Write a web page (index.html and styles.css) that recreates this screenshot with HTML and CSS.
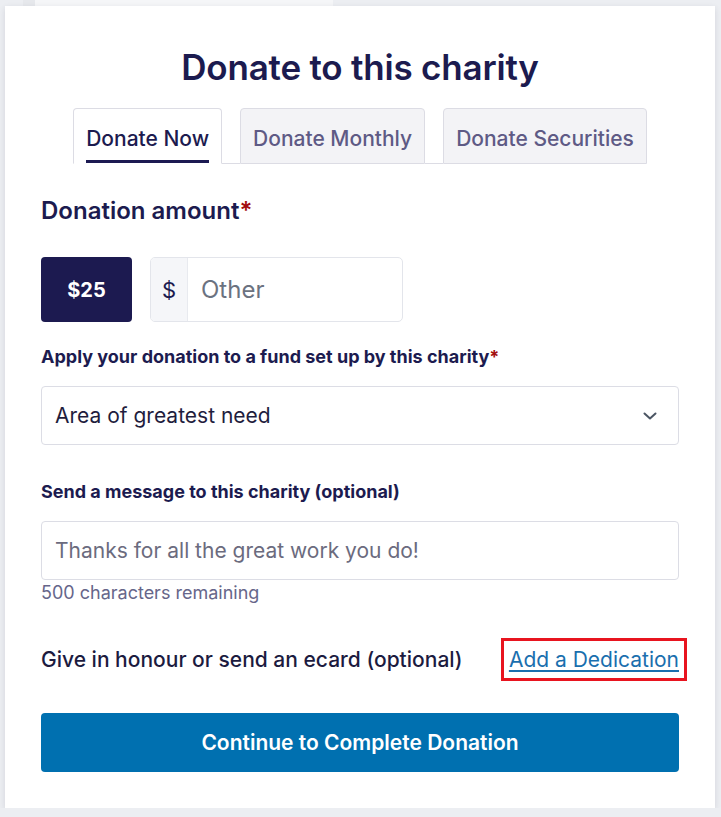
FILE: index.html
```html
<!DOCTYPE html>
<html lang="en">
<head>
<meta charset="utf-8">
<title>Donate to this charity</title>
<link rel="stylesheet" href="styles.css">
</head>
<body>
<div class="top-strip"><div class="top-strip-card"></div></div>
<main class="card">
  <h1 class="title">Donate to this charity</h1>
  <div class="tabs">
    <div class="tab tab-active"><span class="tab-label">Donate Now</span></div>
    <div class="tab-gap"></div>
    <div class="tab"><span class="tab-label">Donate Monthly</span></div>
    <div class="tab-gap"></div>
    <div class="tab"><span class="tab-label">Donate Securities</span></div>
  </div>

  <h2 class="section-title">Donation amount<span class="req">*</span></h2>

  <div class="amount-row">
    <button class="amount-btn">$25</button>
    <div class="other-group">
      <span class="other-prefix">$</span>
      <span class="other-input">Other</span>
    </div>
  </div>

  <label class="field-label fund-label">Apply your donation to a fund set up by this charity<span class="req">*</span></label>
  <div class="select">
    <span class="select-value">Area of greatest need</span>
    <svg class="chevron" width="16" height="16" viewBox="0 0 16 16" aria-hidden="true">
      <polyline points="2.5,5.5 8,10.5 13.5,5.5" fill="none" stroke="#4b5563" stroke-width="2" stroke-linecap="round" stroke-linejoin="round"/>
    </svg>
  </div>

  <label class="field-label msg-label">Send a message to this charity (optional)</label>
  <div class="textarea">Thanks for all the great work you do!</div>
  <div class="counter">500 characters remaining</div>

  <div class="dedication-row">
    <span class="dedication-text">Give in honour or send an ecard (optional)</span>
    <a class="dedication-link" href="#">Add a Dedication</a>
  </div>

  <button class="continue-btn">Continue to Complete Donation</button>
</main>
</body>
</html>
```

FILE: styles.css
```css
* {
  box-sizing: border-box;
}

html, body {
  margin: 0;
  padding: 0;
}

body {
  background: #eceef2;
  font-family: Inter, "Noto Sans", "Liberation Sans", sans-serif;
  color: #1c1b4f;
  padding: 0 6px 0 5px;
}

.top-strip {
  height: 6px;
  padding-left: 18px;
}

.top-strip-card {
  width: 310px;
  height: 6px;
  background: #f5f6f8;
  border-left: 12px solid #e6e8ec;
}

.card {
  width: 710px;
  background: #ffffff;
  box-shadow: 0 2px 6px rgba(30, 30, 60, 0.12);
  padding: 39px 36px 36px;
  display: flex;
  flex-direction: column;
}

.title {
  margin: 0;
  text-align: center;
  font-size: 35px;
  line-height: 44px;
  font-weight: 600;
  color: #1c1b4f;
  letter-spacing: -0.2px;
}

.tabs {
  align-self: center;
  display: flex;
  margin-top: 19px;
  height: 56px;
}

.tab {
  display: flex;
  align-items: flex-end;
  padding: 0 12px;
  background: #f3f3f6;
  border: 1px solid #dcdce4;
  border-radius: 4px 4px 0 0;
  color: #5e5a85;
  font-size: 21px;
  font-weight: 500;
}

.tab-label {
  display: block;
  line-height: 28px;
  padding-bottom: 7px;
  border-bottom: 3px solid transparent;
}

.tab-active {
  background: #ffffff;
  border-bottom-color: #ffffff;
  color: #1c1b4f;
}

.tab-active .tab-label {
  border-bottom-color: #1c1a52;
}

.tab-gap {
  width: 18px;
  border-bottom: 1px solid #dcdce4;
}

.section-title {
  margin: 33px 0 0;
  font-size: 24px;
  line-height: 28px;
  font-weight: 600;
  color: #1c1b4f;
}

.req {
  color: #a30e0e;
}

.amount-row {
  display: flex;
  gap: 18px;
  margin-top: 32px;
  height: 65px;
}

.amount-btn {
  width: 91px;
  height: 65px;
  border: none;
  border-radius: 4px;
  background: #1c1a50;
  color: #ffffff;
  font-family: inherit;
  font-size: 20px;
  font-weight: 700;
  padding: 0;
}

.other-group {
  width: 253px;
  display: flex;
  border: 1px solid #e3e5eb;
  border-radius: 5px;
  overflow: hidden;
}

.other-prefix {
  width: 37px;
  background: #f5f6f9;
  border-right: 1px solid #e8eaef;
  display: flex;
  align-items: center;
  justify-content: center;
  font-size: 22px;
  color: #1c1b4f;
}

.other-input {
  flex: 1;
  display: flex;
  align-items: center;
  padding-left: 13px;
  font-size: 24px;
  color: #6b7280;
}

.field-label {
  display: block;
  font-size: 18px;
  line-height: 24px;
  font-weight: 700;
  color: #1c1b4f;
}

.fund-label {
  margin-top: 23px;
}

.select {
  margin-top: 17px;
  height: 59px;
  border: 1px solid #dcdde5;
  border-radius: 4px;
  display: flex;
  align-items: center;
  justify-content: space-between;
  padding: 0 20px 0 13px;
}

.select-value {
  font-size: 21px;
  color: #1f1d3d;
}

.chevron {
  display: block;
}

.msg-label {
  margin-top: 35px;
}

.textarea {
  margin-top: 17px;
  height: 59px;
  border: 1px solid #dcdde5;
  border-radius: 4px;
  display: flex;
  align-items: center;
  padding: 0 13px;
  font-size: 21px;
  color: #6b6b7e;
}

.counter {
  margin-top: 1px;
  font-size: 18px;
  line-height: 24px;
  color: #66668a;
}

.dedication-row {
  margin-top: 41px;
  display: flex;
  justify-content: space-between;
  align-items: center;
  height: 27px;
}

.dedication-text {
  font-size: 21px;
  line-height: 27px;
  font-weight: 500;
  color: #1c1b3f;
}

.dedication-link {
  display: inline-block;
  font-size: 21px;
  line-height: 27px;
  color: #1a6fae;
  text-decoration: underline;
  text-underline-offset: 3px;
  outline: 3px solid #e8141f;
  outline-offset: 5px;
}

.continue-btn {
  margin-top: 40px;
  height: 59px;
  border: none;
  border-radius: 4px;
  background: #0070b0;
  color: #ffffff;
  font-family: inherit;
  font-size: 21px;
  font-weight: 600;
}
```
